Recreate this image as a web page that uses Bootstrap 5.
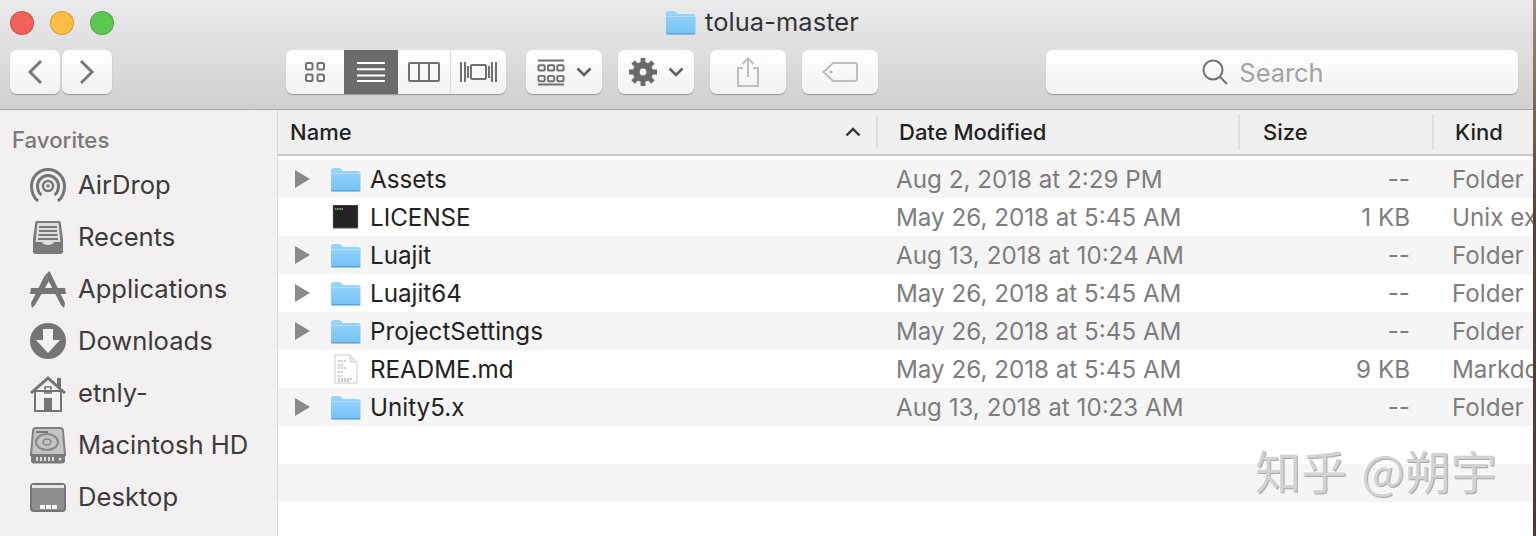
<!DOCTYPE html>
<html lang="en">
<head>
<meta charset="UTF-8">
<title>tolua-master</title>
<link href="https://cdn.jsdelivr.net/npm/bootstrap@5.3.0/dist/css/bootstrap.min.css" rel="stylesheet">
<style>
html, body { height: 536px; overflow: hidden; }
body { font-family: "Inter", "Liberation Sans", sans-serif; background: #fff; color: #222; }
.finder { width: 1536px; height: 536px; position: relative; }
.edge { position: absolute; top: 0; right: 0; width: 3px; height: 536px; background: linear-gradient(#a08a80, #5a4038 40%, #4a3a34); }
.toolbar { height: 110px; background: linear-gradient(#ebebed, #d0d0d0); border-bottom: 1px solid #a8a8a8; }
.title-row { height: 50px; padding-bottom: 5px; }
.lights { width: 124px; padding-left: 10px; gap: 16px; }
.light { width: 24px; height: 24px; border-radius: 50%; border: 1px solid rgba(0,0,0,.15); }
.title-box { margin-left: 541px; gap: 9px; font-size: 25.4px; color: #333; letter-spacing: .1px; }
.tool-row { height: 44px; padding-left: 10px; }
.tbtn { height: 44px; background: linear-gradient(#fff, #f2f2f2); border-radius: 7px; box-shadow: 0 1px 1px rgba(0,0,0,.3); flex: none; }
.tbtn-nav { width: 50px; }
.tbtn-wide { width: 76px; gap: 11px; }
.seg { width: 220px; margin-left: 174px; overflow: hidden; }
.seg-cell { height: 44px; }
.seg-a { width: 58px; }
.seg-b { width: 54px; background: #6b6b6b; }
.seg-c { width: 53px; border-right: 1px solid #dcdcdc; }
.seg-d { width: 55px; }
.search-box { width: 472px; margin-left: 168px; gap: 11px; font-size: 25.4px; color: #a3a3a3; padding: 2px 38px 0 0; }
.search-box svg { margin-top: -2px; }
.main-area { height: 426px; }
.side-bar { width: 278px; flex: none; background: #f2f0f0; border-right: 1px solid #dcdada; padding-top: 17px; }
.side-title { font-size: 22.2px; font-weight: 500; color: #7a7878; padding-left: 12px; height: 26px; line-height: 26px; margin-bottom: 6px; }
.side-item { height: 52px; padding-left: 30px; gap: 12px; font-size: 25.6px; color: #3c3a3a; }
.side-item svg { width: 36px; height: 38px; flex: none; }
.list-pane { min-width: 0; }
.head-row { height: 46px; background: #f0f0f0; border-bottom: 2px solid #c9c9c9; font-size: 22px; font-weight: 500; color: #222; }
.h-cell { height: 34px; flex: none; }
.h-name { width: 600px; padding: 0 15px 0 12px; border-right: 2px solid #dcdcdc; }
.h-date { width: 362px; padding-left: 21px; border-right: 2px solid #dcdcdc; }
.h-size { width: 194px; padding-left: 23px; border-right: 2px solid #dcdcdc; }
.h-kind { padding-left: 21px; }
.file-list { padding-top: 4px; font-size: 24.2px; }
.file-row { height: 38px; white-space: nowrap; overflow: hidden; }
.file-row:nth-child(odd) { background: #f5f5f5; }
.c-tri { width: 52px; padding-left: 17px; flex: none; }
.tri { width: 0; height: 0; border-left: 15px solid #8a8a8a; border-top: 9px solid transparent; border-bottom: 9px solid transparent; }
.c-name { width: 566px; flex: none; gap: 9px; color: #222; padding-top: 2px; }
.c-name svg { margin-top: -2px; }
.c-date { width: 398px; flex: none; color: #7d7d7d; padding-top: 2px; }
.c-size { width: 116px; flex: none; text-align: right; color: #7d7d7d; padding-top: 2px; }
.c-kind { padding-left: 42px; color: #7d7d7d; padding-top: 2px; }
.watermark { position: absolute; left: 1255px; top: 444px; font-family: "Noto Sans CJK SC", sans-serif; font-size: 46px; line-height: 50px; word-spacing: 4px; color: #d2d2d2; text-shadow: 1px 1px 0 #a8a8a8, -1px -1px 0 #fff; white-space: nowrap; }
</style>
</head>
<body>
<svg width="0" height="0" class="position-absolute">
  <defs>
    <linearGradient id="fold" x1="0" y1="0" x2="0" y2="1"><stop offset="0" stop-color="#9ad6fc"/><stop offset="1" stop-color="#74c2f6"/></linearGradient>
    <symbol id="folder" viewBox="0 0 31 25">
      <path d="M1 3.500C1 2 2 1 3.500 1H10l3 3h15c1.300 0 2.500 1 2.500 2.500V22c0 1.300-1 2.300-2.500 2.300H3c-1.200 0-2-1-2-2.300z" fill="url(#fold)"/>
      <path d="M1 23h29.500v.5c-.3.600-1 1-2 1H3c-1 0-1.700-.4-2-1z" fill="#5da6d8"/>
      <path d="M1 6h29.500v.8H1z" fill="#b4e1fd"/>
    </symbol>
  </defs>
</svg>
<div class="finder">
  <div class="toolbar">
    <div class="title-row d-flex align-items-center">
      <div class="lights d-flex">
        <span class="light" style="background:#f0625a"></span>
        <span class="light" style="background:#fbbd42"></span>
        <span class="light" style="background:#5cc84f"></span>
      </div>
      <div class="title-box d-flex align-items-center">
        <svg width="31" height="25"><use href="#folder"/></svg>
        <span>tolua-master</span>
      </div>
    </div>
    <div class="tool-row d-flex">
      <div class="d-flex" style="column-gap:2px">
        <div class="tbtn tbtn-nav d-flex align-items-center justify-content-center">
          <svg width="16" height="26" viewBox="0 0 16 26"><path d="M14 2 3 13l11 11" fill="none" stroke="#7a7a7a" stroke-width="3"/></svg>
        </div>
        <div class="tbtn tbtn-nav d-flex align-items-center justify-content-center">
          <svg width="16" height="26" viewBox="0 0 16 26"><path d="m2 2 11 11L2 24" fill="none" stroke="#7a7a7a" stroke-width="3"/></svg>
        </div>
      </div>
      <div class="tbtn seg d-flex">
        <div class="seg-cell seg-a d-flex align-items-center justify-content-center">
          <svg width="22" height="22" viewBox="0 0 22 22" fill="none" stroke="#707070" stroke-width="2"><rect x="2" y="2" width="6.500" height="6.500" rx="1.500"/><rect x="13.500" y="2" width="6.500" height="6.500" rx="1.500"/><rect x="2" y="13.500" width="6.500" height="6.500" rx="1.500"/><rect x="13.500" y="13.500" width="6.500" height="6.500" rx="1.500"/></svg>
        </div>
        <div class="seg-cell seg-b d-flex align-items-center justify-content-center">
          <svg width="28" height="20" viewBox="0 0 28 20" stroke="#fff" stroke-width="2"><path d="M0 1h28M0 7.300h28M0 13.600h28M0 19h28"/></svg>
        </div>
        <div class="seg-cell seg-c d-flex align-items-center justify-content-center">
          <svg width="32" height="20" viewBox="0 0 32 20" fill="none" stroke="#707070" stroke-width="2"><rect x="1" y="1" width="30" height="18" rx="1"/><path d="M11 1v18M21 1v18"/></svg>
        </div>
        <div class="seg-cell seg-d d-flex align-items-center justify-content-center">
          <svg width="37" height="20" viewBox="0 0 37 20" fill="none" stroke="#707070" stroke-width="2"><rect x="11" y="3" width="15" height="14" rx="1"/><path d="M1 0v20M5 0v20M8 4v12M29 4v12M32 0v20M36 0v20"/></svg>
        </div>
      </div>
      <div class="tbtn tbtn-wide d-flex align-items-center justify-content-center" style="margin-left:20px">
        <svg width="28" height="27" viewBox="0 0 29 27" fill="none" stroke="#707070" stroke-width="2"><path d="M1 1h27M1 26h27" /><rect x="1.500" y="6" width="6.500" height="5.500" rx="1"/><rect x="11.300" y="6" width="6.500" height="5.500" rx="1"/><rect x="21" y="6" width="6.500" height="5.500" rx="1"/><rect x="1.500" y="17" width="6.500" height="5.500" rx="1"/><rect x="11.300" y="17" width="6.500" height="5.500" rx="1"/><rect x="21" y="17" width="6.500" height="5.500" rx="1"/></svg>
        <svg width="16" height="10" viewBox="0 0 16 10"><path d="m1.500 1.500 6.500 6.500 6.500-6.500" fill="none" stroke="#5f5f5f" stroke-width="2.600"/></svg>
      </div>
      <div class="tbtn tbtn-wide d-flex align-items-center justify-content-center" style="margin-left:16px">
        <svg width="28" height="28" viewBox="0 0 29 29"><circle cx="14.500" cy="14.500" r="7" fill="none" stroke="#6a6a6a" stroke-width="7"/><g stroke="#6a6a6a" stroke-width="5"><path d="M14.500 0v6M14.500 23v6M0 14.500h6M23 14.500h6M4.200 4.200l4.200 4.200M20.600 20.600l4.200 4.200M24.800 4.200l-4.200 4.200M8.400 20.600l-4.200 4.200"/></g></svg>
        <svg width="16" height="10" viewBox="0 0 16 10"><path d="m1.500 1.500 6.500 6.500 6.500-6.500" fill="none" stroke="#5f5f5f" stroke-width="2.600"/></svg>
      </div>
      <div class="tbtn tbtn-wide d-flex align-items-center justify-content-center" style="margin-left:16px">
        <svg width="24" height="30" viewBox="0 0 24 30" fill="none" stroke="#bdbdbd" stroke-width="2"><path d="M7 11H2v18h20V11h-5M12 20V2M6.500 7 12 1.500 17.500 7"/></svg>
      </div>
      <div class="tbtn tbtn-wide d-flex align-items-center justify-content-center" style="margin-left:16px">
        <svg width="36" height="20" viewBox="0 0 36 20" fill="none" stroke="#bdbdbd" stroke-width="2"><path d="M11 1h22c1.200 0 2 .8 2 2v14c0 1.200-.8 2-2 2H11L1.500 10z"/><circle cx="9" cy="10" r="1.500" fill="#bdbdbd" stroke="none"/></svg>
      </div>
      <div class="tbtn search-box d-flex align-items-center justify-content-center">
        <svg width="26" height="26" viewBox="0 0 26 26" fill="none" stroke="#6f6f6f" stroke-width="2"><circle cx="11" cy="11" r="9.500"/><path d="m18 18 7 7"/></svg>
        <span>Search</span>
      </div>
    </div>
  </div>

  <div class="main-area d-flex">
    <div class="side-bar">
      <div class="side-title">Favorites</div>
      <div class="side-item d-flex align-items-center">
        <svg viewBox="0 0 36 38" fill="none" stroke="#757575" stroke-width="3"><path d="M8 35C3.500 31.500 1.500 26 1.500 20a16.500 16.500 0 0 1 33 0c0 6-2 11.500-6.500 15"/><path d="M11.500 29C8.800 27 7.500 23.500 7.500 20a10.500 10.500 0 0 1 21 0c0 3.500-1.300 7-4 9"/><circle cx="18" cy="20" r="5" stroke-width="2.500"/><circle cx="18" cy="20" r="1.800" fill="#757575" stroke="none"/></svg>
        <span>AirDrop</span>
      </div>
      <div class="side-item d-flex align-items-center">
        <svg viewBox="0 0 36 38"><path d="M7 3h22c1 0 1.500.5 1.700 1.500L33 21v13c0 1.200-.8 2-2 2H5c-1.200 0-2-.8-2-2V21L5.300 4.500C5.500 3.500 6 3 7 3z" fill="#7a7a7a"/><path d="M7.500 5h21L30.500 24H24c-.5 2-3 3-6 3s-5.500-1-6-3H5.500z" fill="#dfdddd"/><path d="M9 9h18M9 13h18M8.500 17h19M8 21h20" stroke="#7a7a7a" stroke-width="1.800"/></svg>
        <span>Recents</span>
      </div>
      <div class="side-item d-flex align-items-center">
        <svg viewBox="0 0 36 38" fill="#757575"><path d="M19.500 1 35 33l-1 5-3-3L15.500 5z"/><path d="M15 5 1 33l1 5 3-3L19 11z"/><path d="M1 18h8l-3 6H0zM27 18h8l1 6h-6zM12 18h12l3 6H9z"/></svg>
        <span>Applications</span>
      </div>
      <div class="side-item d-flex align-items-center">
        <svg viewBox="0 0 36 38"><circle cx="18" cy="19" r="18" fill="#757575"/><path d="M13 7h10v11h7L18 31 6 18h7z" fill="#f2f0f0"/></svg>
        <span>Downloads</span>
      </div>
      <div class="side-item d-flex align-items-center">
        <svg viewBox="0 0 36 38"><path d="M5 17h26v20H5z" fill="#f5f3f3" stroke="#757575" stroke-width="2"/><path d="M0 18 18 2l9 8V4h4v10l5 4-2 2L18 6 2 20z" fill="#757575"/><rect x="15" y="13" width="6" height="6" fill="none" stroke="#757575" stroke-width="1.500"/><rect x="14" y="24" width="8" height="13" fill="#757575"/></svg>
        <span>etnly-</span>
      </div>
      <div class="side-item d-flex align-items-center">
        <svg viewBox="0 0 36 38"><path d="M6 2h24c2 0 3 1 3 3l2 24H1L3 5c0-2 1-3 3-3z" fill="#c5c3c3" stroke="#808080" stroke-width="2"/><ellipse cx="17" cy="16" rx="11" ry="8" fill="none" stroke="#888" stroke-width="2"/><ellipse cx="17" cy="16" rx="4" ry="3" fill="none" stroke="#888" stroke-width="1.500"/><path d="M6 6h12" stroke="#777" stroke-width="2"/><path d="M1 28h34v7c0 1.500-1 2.500-2.500 2.500h-29C2 37.500 1 36.500 1 35z" fill="#7a7a7a"/><path d="M7 31v4M11 31v4M15 31v4M19 31v4M23 31v4" stroke="#ddd" stroke-width="2"/><circle cx="30" cy="33" r="1.500" fill="#ddd"/></svg>
        <span>Macintosh HD</span>
      </div>
      <div class="side-item d-flex align-items-center">
        <svg viewBox="0 0 36 38"><rect x="1" y="6" width="34" height="27" rx="3" fill="#8f8f8f" stroke="#757575" stroke-width="2"/><path d="M2 7h32v3H2z" fill="#e8e8e8"/><path d="M10 27h5v4h-5zM16 27h5v4h-5zM22 27h5v4h-5z" fill="#f2f2f2"/></svg>
        <span>Desktop</span>
      </div>
    </div>

    <div class="list-pane flex-grow-1">
      <div class="head-row d-flex align-items-center">
        <div class="h-name h-cell d-flex align-items-center justify-content-between">
          <span>Name</span>
          <svg width="16" height="10" viewBox="0 0 16 10"><path d="m1.500 8.500 6.500-6.500 6.500 6.500" fill="none" stroke="#333" stroke-width="2.400"/></svg>
        </div>
        <div class="h-date h-cell d-flex align-items-center">Date Modified</div>
        <div class="h-size h-cell d-flex align-items-center">Size</div>
        <div class="h-kind h-cell d-flex align-items-center">Kind</div>
      </div>
      <div class="file-list">
        <div class="file-row d-flex align-items-center">
          <div class="c-tri"><div class="tri"></div></div>
          <div class="c-name d-flex align-items-center"><svg width="31" height="25"><use href="#folder"/></svg><span>Assets</span></div>
          <div class="c-date">Aug 2, 2018 at 2:29 PM</div><div class="c-size">--</div><div class="c-kind">Folder</div>
        </div>
        <div class="file-row d-flex align-items-center">
          <div class="c-tri"></div>
          <div class="c-name d-flex align-items-center">
            <svg width="31" height="25" viewBox="0 0 31 25"><rect x="3" y="0" width="25" height="23" fill="#232323" stroke="#8a8a8a" stroke-width=".5"/><path d="M3 23.500h25" stroke="#aaa"/><path d="M5 4h8" stroke="#8fbf8f" stroke-width="1.500" stroke-dasharray="1.500 .7"/></svg>
            <span>LICENSE</span>
          </div>
          <div class="c-date">May 26, 2018 at 5:45 AM</div><div class="c-size">1 KB</div><div class="c-kind">Unix ex</div>
        </div>
        <div class="file-row d-flex align-items-center">
          <div class="c-tri"><div class="tri"></div></div>
          <div class="c-name d-flex align-items-center"><svg width="31" height="25"><use href="#folder"/></svg><span>Luajit</span></div>
          <div class="c-date">Aug 13, 2018 at 10:24 AM</div><div class="c-size">--</div><div class="c-kind">Folder</div>
        </div>
        <div class="file-row d-flex align-items-center">
          <div class="c-tri"><div class="tri"></div></div>
          <div class="c-name d-flex align-items-center"><svg width="31" height="25"><use href="#folder"/></svg><span>Luajit64</span></div>
          <div class="c-date">May 26, 2018 at 5:45 AM</div><div class="c-size">--</div><div class="c-kind">Folder</div>
        </div>
        <div class="file-row d-flex align-items-center">
          <div class="c-tri"><div class="tri"></div></div>
          <div class="c-name d-flex align-items-center"><svg width="31" height="25"><use href="#folder"/></svg><span>ProjectSettings</span></div>
          <div class="c-date">May 26, 2018 at 5:45 AM</div><div class="c-size">--</div><div class="c-kind">Folder</div>
        </div>
        <div class="file-row d-flex align-items-center">
          <div class="c-tri"></div>
          <div class="c-name d-flex align-items-center">
            <svg width="31" height="30" viewBox="0 0 31 30"><path d="M5 1h15l7 7v21H5z" fill="#fff" stroke="#ccc"/><path d="M20 1v7h7" fill="#eee" stroke="#ccc"/><path d="M8 7h8M8 11h5M8 14h9M8 18h6M8 22h4M8 25h14M8 27h12" stroke="#999" stroke-width="1" stroke-dasharray="2 1"/></svg>
            <span>README.md</span>
          </div>
          <div class="c-date">May 26, 2018 at 5:45 AM</div><div class="c-size">9 KB</div><div class="c-kind">Markdo</div>
        </div>
        <div class="file-row d-flex align-items-center">
          <div class="c-tri"><div class="tri"></div></div>
          <div class="c-name d-flex align-items-center"><svg width="31" height="25"><use href="#folder"/></svg><span>Unity5.x</span></div>
          <div class="c-date">Aug 13, 2018 at 10:23 AM</div><div class="c-size">--</div><div class="c-kind">Folder</div>
        </div>
        <div class="file-row"></div>
        <div class="file-row"></div>
        <div class="file-row"></div>
      </div>
    </div>
  </div>
  <div class="watermark">知乎 @朔宇</div>
  <div class="edge"></div>
</div>
<script src="https://cdn.jsdelivr.net/npm/bootstrap@5.3.0/dist/js/bootstrap.bundle.min.js"></script>
</body>
</html>
